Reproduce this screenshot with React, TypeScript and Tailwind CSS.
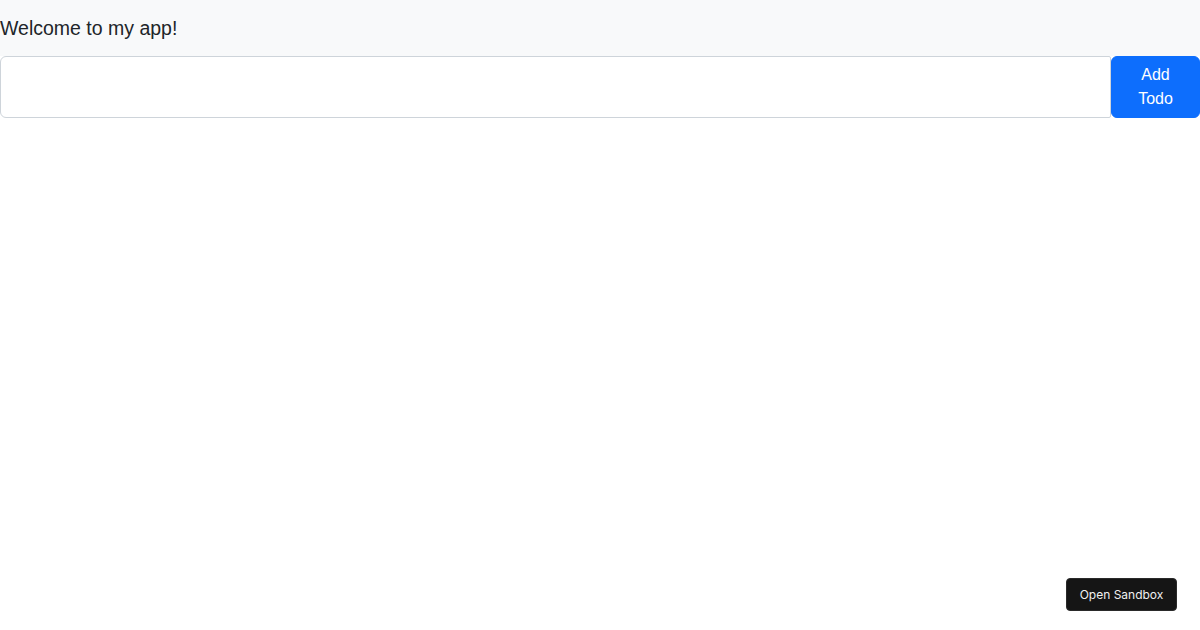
export default function App() {
  return (
    <div className="min-h-[630px] bg-white text-[#212529] font-['Liberation_Sans',Arial,sans-serif]">
      <header className="h-[56px] bg-[#f8f9fa] flex items-center">
        <h1 className="text-[19.5px] leading-[30px] font-normal">Welcome to my app!</h1>
      </header>
      <form className="flex items-stretch" onSubmit={(e) => e.preventDefault()}>
        <input
          type="text"
          className="flex-1 min-w-0 h-[62px] px-3 border border-[#ced4da] rounded-l-[6px] rounded-r-[2px] bg-white text-base outline-none"
        />
        <button
          type="submit"
          className="w-[89px] h-[62px] px-3 py-[6px] bg-[#0d6efd] text-white text-base leading-6 rounded-[6px] border border-[#0d6efd]"
        >
          Add Todo
        </button>
      </form>
      <button className="fixed right-[23px] bottom-[19px] w-[111px] h-[33px] rounded-[4px] bg-[#151515] text-[#f0f0f0] text-[12px] font-['Inter',sans-serif] border border-[#2a2a2a]">
        Open Sandbox
      </button>
    </div>
  )
}
